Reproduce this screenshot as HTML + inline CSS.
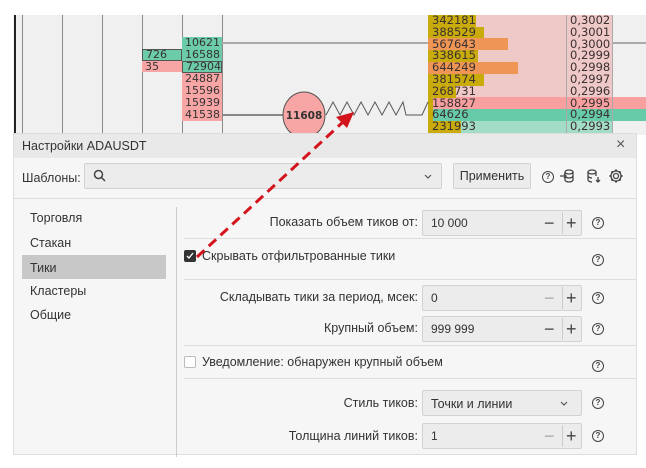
<!DOCTYPE html>
<html><head><meta charset="utf-8"><style>
*{box-sizing:border-box;margin:0;padding:0}
body{width:646px;height:468px;background:#fff;position:relative;overflow:hidden;font-family:"Liberation Sans","DejaVu Sans",sans-serif}
.a{position:absolute}
.chart{left:13px;top:15px;width:633px;height:120px;background:#f0f0f0;overflow:hidden}
.vl{position:absolute;top:0;width:1px;height:120px;background:#8a8a8a}
.c{position:absolute;font-family:"DejaVu Sans",sans-serif;font-size:11px;line-height:12px;color:#333;padding-left:3px}
.dlg{left:13px;top:133px;width:624px;height:322px;background:#f6f6f6;border:1px solid #ddd;font-size:12.5px;color:#333}
.hdr{left:0;top:0;width:622px;height:24px;background:#e9e9e9}
.inp{position:absolute;height:26px;background:#ececec;border:1px solid #d2d2d2;border-radius:2px;font-size:12px;line-height:24px;padding-left:8px;color:#333}
.lbl{position:absolute;text-align:right;font-size:12.5px;color:#333}
.sep{position:absolute;height:1px;background:#ddd}
.q{position:absolute;width:12px;height:12px;border:1.3px solid #444;border-radius:50%;font-size:8px;line-height:10px;text-align:center;font-weight:bold;color:#444}
.pm{position:absolute;font-size:18px;color:#444;line-height:24px}
</style></head><body>
<div class="a chart">
 <div class="vl" style="left:1px;width:2px;background:#222"></div>
 <div class="vl" style="left:9px"></div>
 <div class="vl" style="left:49px"></div>
 <div class="vl" style="left:89px"></div>
 <div class="vl" style="left:129px"></div>
 <div class="vl" style="left:169px"></div>
 <div class="vl" style="left:209px"></div>
 <div class="a" style="left:209px;top:27px;width:430px;height:2px;background:#aaa"></div>
 <div class="a" style="left:209px;top:99px;width:63px;height:2px;background:#888"></div>
 <div class="c" style="left:129px;top:34px;width:40px;height:12px;background:#6ccba8;border:1px solid #555;line-height:10px">726</div>
 <div class="c" style="left:129px;top:46px;width:40px;height:11px;background:#f8a5a5">35</div>
 <div class="c" style="left:169px;top:22px;width:40px;height:12px;background:#6ccba8">10621</div>
 <div class="c" style="left:169px;top:34px;width:40px;height:12px;background:#6ccba8">16588</div>
 <div class="c" style="left:169px;top:46px;width:40px;height:12px;background:#6ccba8;border:1px solid #555;line-height:10px">72904</div>
 <div class="c" style="left:169px;top:58px;width:40px;height:48px;background:#f8a5a5;line-height:12px">24887<br>15596<br>15939<br>41538</div>
 <div class="a" style="left:415px;top:0;width:185px;height:118px;background:#efc8c8"></div>
 <div class="a" style="left:415px;top:82px;width:220px;height:12px;background:#f8a0a0"></div>
 <div class="a" style="left:415px;top:94px;width:220px;height:12px;background:#66cba9"></div>
 <div class="a" style="left:415px;top:106px;width:185px;height:14px;background:#a3dcc7"></div>
 <div class="a" style="left:415px;top:0;width:48px;height:12px;background:#c9ab0c"></div>
 <div class="a" style="left:415px;top:12px;width:56px;height:12px;background:#c9ab0c"></div>
 <div class="a" style="left:415px;top:23px;width:80px;height:12px;background:#ef9656"></div>
 <div class="a" style="left:415px;top:35px;width:50px;height:12px;background:#c9ab0c"></div>
 <div class="a" style="left:415px;top:47px;width:90px;height:12px;background:#ef9656"></div>
 <div class="a" style="left:415px;top:59px;width:56px;height:12px;background:#c9ab0c"></div>
 <div class="a" style="left:415px;top:71px;width:28px;height:12px;background:#c9ab0c"></div>
 <div class="a" style="left:415px;top:82px;width:5px;height:38px;background:#c9ab0c"></div>
 <div class="a" style="left:415px;top:106px;width:33px;height:14px;background:#c9ab0c"></div>
 <div class="vl" style="left:553px;background:#aaa"></div>
 <div class="vl" style="left:599px;background:#aaa"></div>
 <div class="c" style="left:416px;top:0;line-height:11.8px;font-size:11.5px;color:#3a3030">342181<br>388529<br>567643<br>338615<br>644249<br>381574<br>268731<br>158827<br>64626<br>231993</div>
 <div class="c" style="left:554px;top:0;line-height:11.8px;font-size:11.5px;color:#3a3030">0,3002<br>0,3001<br>0,3000<br>0,2999<br>0,2998<br>0,2997<br>0,2996<br>0,2995<br>0,2994<br>0,2993</div>
</div>
<svg class="a" style="left:0;top:0" width="646" height="468">
 <ellipse cx="304" cy="115" rx="21" ry="23" fill="#f8a5a5" stroke="#555" stroke-width="1"/>
 <text x="304" y="119" text-anchor="middle" font-family="DejaVu Sans" font-weight="bold" font-size="10.5" fill="#333">11608</text>
 <polyline points="326,115 333,102 340,115 347,102 354,115 361,102 368,115 375,102 382,115 389,102 396,115 403,102 406,115 422,115 428,102" fill="none" stroke="#555" stroke-width="1"/>
</svg>
<div class="a dlg">
 <div class="a hdr"></div>
 <div class="a" style="left:8px;top:5px;font-size:12.5px">Настройки ADAUSDT</div>
 <div class="a" style="left:602px;top:2px;font-size:16px;color:#555">×</div>
 <div class="a" style="left:8px;top:37px">Шаблоны:</div>
 <div class="inp" style="left:70px;top:29px;width:358px;height:26px"></div>
 <svg class="a" style="left:79px;top:35px" width="14" height="14"><circle cx="5.5" cy="5.5" r="4" fill="none" stroke="#444" stroke-width="1.5"/><line x1="8.5" y1="8.5" x2="12" y2="12" stroke="#444" stroke-width="1.5"/></svg>
 <svg class="a" style="left:410px;top:39px" width="10" height="8"><polyline points="1,2 4,5 7,2" fill="none" stroke="#555" stroke-width="1.2"/></svg>
 <div class="inp" style="left:439px;top:29px;width:78px;padding:0;text-align:center;font-size:12.5px;color:#333">Применить</div>
 <div class="q" style="left:528px;top:37px">?</div>
 <svg class="a" style="left:545px;top:34px" width="16" height="16"><ellipse cx="10" cy="4" rx="4" ry="2" fill="none" stroke="#444" stroke-width="1.3"/><path d="M6 4v8c0 1 2 2 4 2s4-1 4-2V4M6 8c0 1 2 2 4 2s4-1 4-2M1 8h6M5 6l2 2-2 2" fill="none" stroke="#444" stroke-width="1.3"/></svg>
 <svg class="a" style="left:572px;top:34px" width="16" height="16"><ellipse cx="6" cy="4" rx="4" ry="2" fill="none" stroke="#444" stroke-width="1.3"/><path d="M2 4v8c0 1 2 2 4 2M10 4v4M2 8c0 1 2 2 4 2M12 9v5M10 12l2 2 2-2" fill="none" stroke="#444" stroke-width="1.3"/></svg>
 <svg class="a" style="left:594px;top:34px" width="16" height="16"><circle cx="8" cy="8" r="2.5" fill="none" stroke="#444" stroke-width="1.3"/><path d="M8 1.5v2M8 12.5v2M1.5 8h2M12.5 8h2M3.4 3.4l1.4 1.4M11.2 11.2l1.4 1.4M3.4 12.6l1.4-1.4M11.2 4.8l1.4-1.4" stroke="#444" stroke-width="2"/><circle cx="8" cy="8" r="5" fill="none" stroke="#444" stroke-width="1.3"/></svg>
 <div class="sep" style="left:0;top:64px;width:622px"></div>
 <div class="a" style="left:16px;top:77px">Торговля</div>
 <div class="a" style="left:16px;top:102px">Стакан</div>
 <div class="a" style="left:8px;top:121px;width:144px;height:24px;background:#c8c8c8"></div>
 <div class="a" style="left:16px;top:127px">Тики</div>
 <div class="a" style="left:16px;top:150px">Кластеры</div>
 <div class="a" style="left:16px;top:174px">Общие</div>
 <div class="a" style="left:162px;top:73px;width:1px;height:250px;background:#ccc"></div>

 <div class="lbl" style="left:170px;top:81px;width:234px">Показать объем тиков от:</div>
 <div class="inp" style="left:408px;top:76px;width:160px">10 000</div>
 <div class="pm" style="left:530px;top:77px">−</div><div class="a" style="left:548px;top:78px;width:1px;height:22px;background:#ccc"></div><div class="pm" style="left:552px;top:77px">+</div>
 <div class="q" style="left:578px;top:83px">?</div>
 <div class="sep" style="left:170px;top:104px;width:452px"></div>

 <div class="a" style="left:170px;top:116px;width:12px;height:12px;background:#333;border-radius:2px"></div>
 <svg class="a" style="left:172px;top:118px" width="8" height="8"><polyline points="1,4 3,6 7,1" fill="none" stroke="#fff" stroke-width="1.3"/></svg>
 <div class="a" style="left:188px;top:115px">Скрывать отфильтрованные тики</div>
 <div class="q" style="left:578px;top:120px">?</div>
 <div class="sep" style="left:170px;top:145px;width:452px"></div>

 <div class="lbl" style="left:170px;top:156px;width:234px">Складывать тики за период, мсек:</div>
 <div class="inp" style="left:408px;top:151px;width:160px">0</div>
 <div class="pm" style="left:530px;top:152px;color:#aaa">−</div><div class="a" style="left:548px;top:153px;width:1px;height:22px;background:#ccc"></div><div class="pm" style="left:552px;top:152px">+</div>
 <div class="q" style="left:578px;top:158px">?</div>

 <div class="lbl" style="left:170px;top:187px;width:234px">Крупный объем:</div>
 <div class="inp" style="left:408px;top:182px;width:160px">999 999</div>
 <div class="pm" style="left:530px;top:183px">−</div><div class="a" style="left:548px;top:184px;width:1px;height:22px;background:#ccc"></div><div class="pm" style="left:552px;top:183px">+</div>
 <div class="q" style="left:578px;top:189px">?</div>
 <div class="sep" style="left:170px;top:211px;width:452px"></div>

 <div class="a" style="left:170px;top:222px;width:12px;height:12px;background:#fff;border:1px solid #bbb;border-radius:2px"></div>
 <div class="a" style="left:188px;top:221px">Уведомление: обнаружен крупный объем</div>
 <div class="q" style="left:578px;top:226px">?</div>
 <div class="sep" style="left:170px;top:244px;width:452px"></div>

 <div class="lbl" style="left:170px;top:262px;width:234px">Стиль тиков:</div>
 <div class="inp" style="left:408px;top:256px;width:160px;line-height:26px;font-size:12.5px">Точки и линии</div>
 <svg class="a" style="left:546px;top:266px" width="10" height="8"><polyline points="1,2 4,5 7,2" fill="none" stroke="#555" stroke-width="1.2"/></svg>
 <div class="q" style="left:578px;top:263px">?</div>

 <div class="lbl" style="left:170px;top:295px;width:234px">Толщина линий тиков:</div>
 <div class="inp" style="left:408px;top:289px;width:160px">1</div>
 <div class="pm" style="left:530px;top:290px;color:#aaa">−</div><div class="a" style="left:548px;top:291px;width:1px;height:22px;background:#ccc"></div><div class="pm" style="left:552px;top:290px">+</div>
 <div class="q" style="left:578px;top:296px">?</div>
</div>
<svg class="a" style="left:0;top:0" width="646" height="468">
 <line x1="197" y1="257" x2="343" y2="122" stroke="#d4141c" stroke-width="3" stroke-dasharray="10,6"/>
 <polygon points="354,112 336,117 347,128" fill="#d4141c"/>
</svg>
</body></html>
